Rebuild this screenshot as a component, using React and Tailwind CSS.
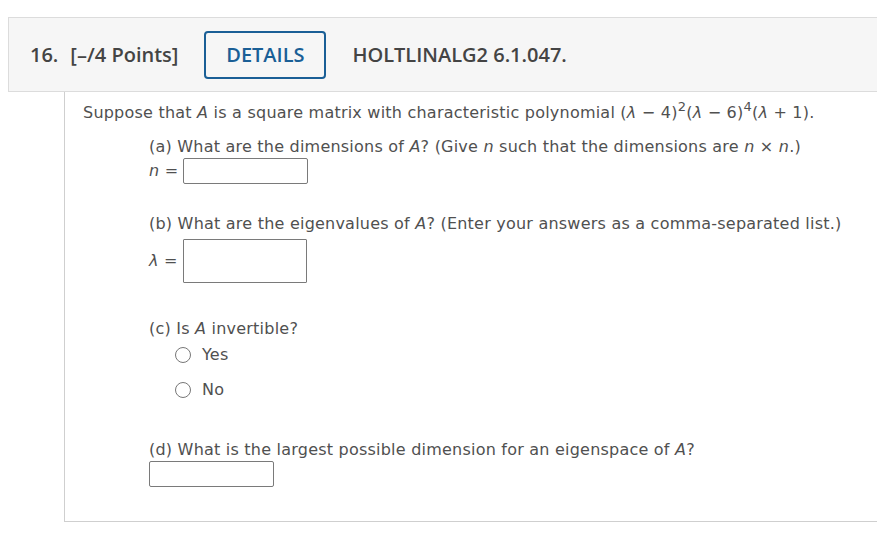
import React from "react";

function Radio({ label }) {
  return (
    <label className="flex items-center gap-[11px] h-[20px]">
      <span className="w-[16px] h-[16px] rounded-full border border-[#777] bg-white inline-block"></span>
      <span>{label}</span>
    </label>
  );
}

function Sup({ children }) {
  return <sup className="text-[13px] relative top-[-0.55em] align-baseline">{children}</sup>;
}

export default function App() {
  return (
    <div className="w-[877px] h-[551px] bg-white overflow-hidden pt-[17px]">
      <div className="ml-[8px] h-[75px] bg-[#f6f6f6] border border-[#dcdcdc] border-r-0 flex items-center pl-[21px] text-[#444] font-['Open_Sans',sans-serif]">
        <span className="text-[20px] font-semibold">16.</span>
        <span className="ml-[12px] text-[20px] font-semibold">[–/4 Points]</span>
        <div className="ml-[26px] w-[122px] h-[48px] border-2 border-[#1a5f96] rounded-[4px] flex items-center justify-center text-[#1a5f96] text-[20px] font-semibold bg-[#f6f6f6]">
          DETAILS
        </div>
        <span className="ml-[26px] text-[20px] font-semibold">HOLTLINALG2 6.1.047.</span>
      </div>
      <div className="ml-[64px] h-[430px] border-l border-b border-[#cfcfcf] text-[#505050] text-[16px] tracking-[0.22px] pl-[18px] font-['DejaVu_Sans',Verdana,sans-serif]">
        <div className="pt-[10px] leading-[22px]">
          Suppose that <i>A</i> is a square matrix with characteristic polynomial (<i>λ</i> − 4)
          <Sup>2</Sup>(<i>λ</i> − 6)
          <Sup>4</Sup>(<i>λ</i> + 1).
        </div>
        <div className="pl-[66px]">
          <div className="mt-[12px] leading-[22px]">
            (a) What are the dimensions of <i>A</i>? (Give <i>n</i> such that the dimensions are <i>n</i> × <i>n</i>.)
          </div>
          <div className="flex items-center mt-0">
            <span className="w-[34px]"><i>n</i> =</span>
            <div className="w-[125px] h-[26px] border border-[#7a7a7a] rounded-[2px] bg-white"></div>
          </div>
          <div className="mt-[29px] leading-[22px]">
            (b) What are the eigenvalues of <i>A</i>? (Enter your answers as a comma-separated list.)
          </div>
          <div className="flex items-center mt-[4px]">
            <span className="w-[34px]"><i>λ</i> =</span>
            <div className="w-[124px] h-[44px] border border-[#7a7a7a] rounded-[1px] bg-white"></div>
          </div>
          <div className="mt-[35px] leading-[22px]">
            (c) Is <i>A</i> invertible?
          </div>
          <div className="pl-[26px] mt-[5px] flex flex-col gap-[15px]">
            <Radio label="Yes" />
            <Radio label="No" />
          </div>
          <div className="mt-[39px] leading-[22px]">
            (d) What is the largest possible dimension for an eigenspace of <i>A</i>?
          </div>
          <div className="w-[125px] h-[26px] border border-[#7a7a7a] rounded-[2px] bg-white mt-0"></div>
        </div>
      </div>
    </div>
  );
}
